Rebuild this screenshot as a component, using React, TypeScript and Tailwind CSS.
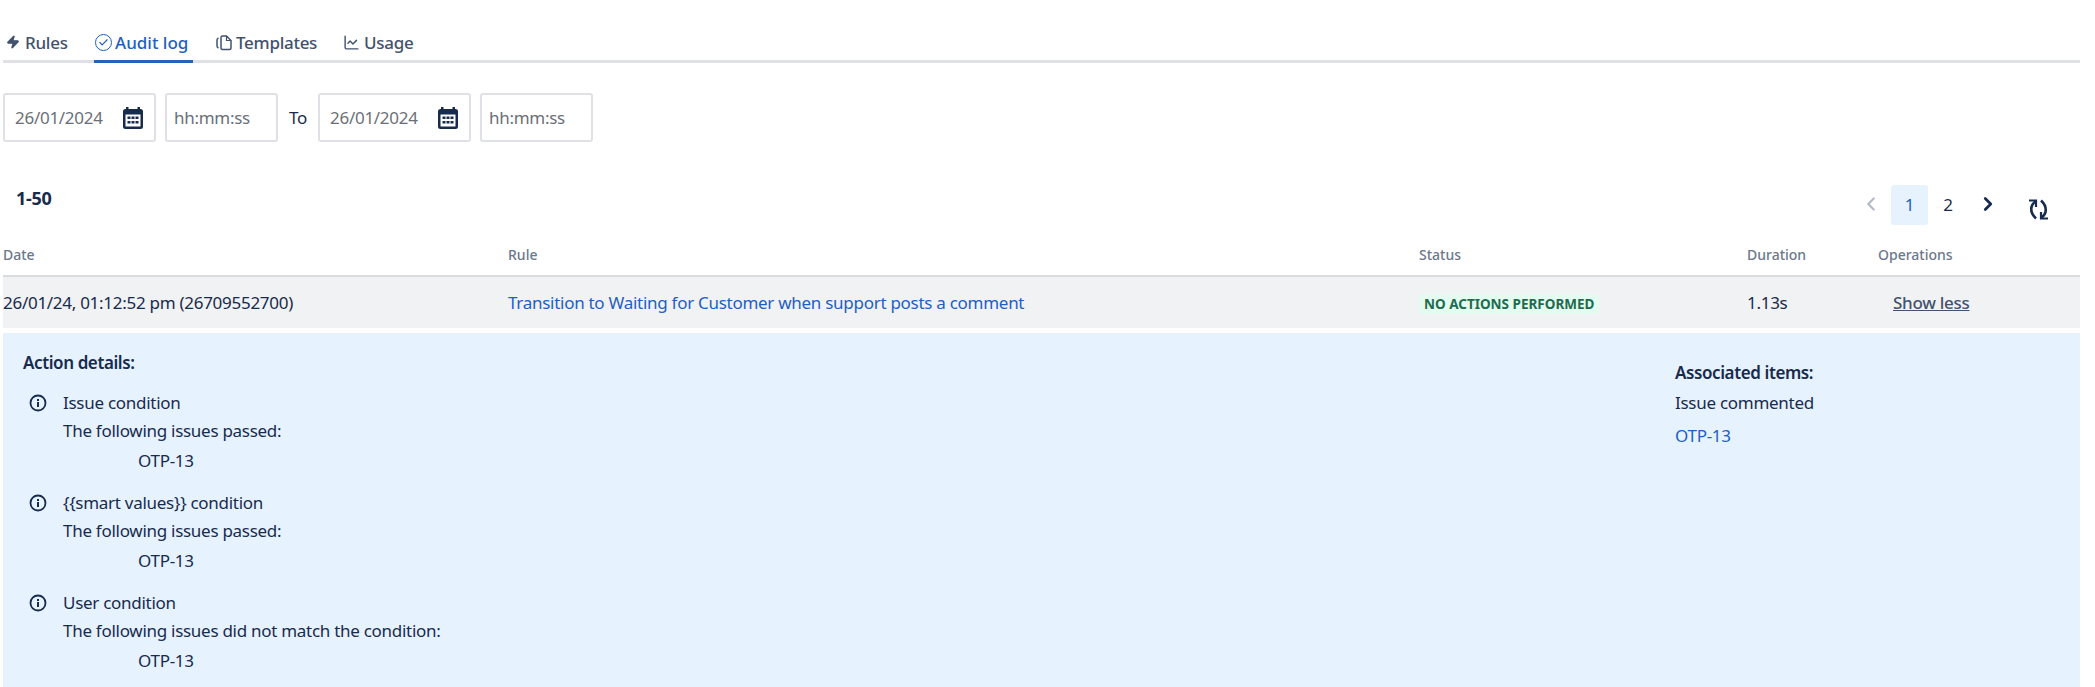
import { Check, ChevronLeft, ChevronRight, LineChart, Zap } from "lucide-react";

const columns = "grid grid-cols-[505px_911px_328px_131px_1fr]";

function CalendarIcon() {
    return (
        <svg width="24" height="24" viewBox="0 0 24 24" className="shrink-0">
            <path fill="#172b4d" fillRule="evenodd" d="M5 1h2.500v2h9V1H19v2h.5A2.500 2.500 0 0 1 22 5.500v15a2.500 2.500 0 0 1-2.500 2.500h-15A2.500 2.500 0 0 1 2 20.500v-15A2.500 2.500 0 0 1 4.500 3H5zM4.500 8.500V20a.5.5 0 0 0 .5.5h14a.5.5 0 0 0 .5-.5V8.500z" />
            <path fill="#172b4d" d="M6.500 10.500h3V13h-3zM10.500 10.500h3V13h-3zM14.500 10.500h3V13h-3zM6.500 15h3v2.500h-3zM10.500 15h3v2.500h-3zM14.500 15h3v2.500h-3z" />
        </svg>
    );
}

function TemplatesIcon() {
    return (
        <svg width="16" height="16" viewBox="0 0 16 16" fill="none" stroke="#42526e" strokeWidth="1.500" className="mt-[5px] shrink-0">
            <path d="M6.500 1h4L15 5.500V13a1.500 1.500 0 0 1-1.500 1.500h-7A1.500 1.500 0 0 1 5 13V2.500A1.500 1.500 0 0 1 6.500 1z" />
            <path d="M10.500 1v4.500H15" strokeWidth="1.200" />
            <path d="M2.500 3C1.500 3.500 1 4 1 5v6c0 1 .5 1.500 1.500 2" />
        </svg>
    );
}

function InfoIcon() {
    return (
        <svg width="18" height="18" viewBox="0 0 18 18" className="shrink-0">
            <circle cx="9" cy="9" r="7.500" fill="none" stroke="#172b4d" strokeWidth="1.800" />
            <rect x="8" y="8" width="2" height="5" fill="#172b4d" />
            <rect x="8" y="5" width="2" height="2" fill="#172b4d" />
        </svg>
    );
}

function RefreshIcon() {
    return (
        <svg width="21" height="21" viewBox="0 0 21 21" fill="none" stroke="#172b4d" strokeWidth="2.600">
            <path d="M7.500 2.500C2.500 6 1 13 8 19.500" />
            <path d="M1 1.500h7v6.500" strokeWidth="2.200" />
            <path d="M13.500 18.500C18.500 15 20 8 13 1.500" />
            <path d="M20 19.500h-7V13" strokeWidth="2.200" />
        </svg>
    );
}

function DateField() {
    return (
        <div className="flex h-[49px] w-[153px] items-center justify-between rounded-[3px] border-2 border-[#dfe1e6] pl-[10px] pr-[9px] text-[#6b7078]">
            <span>26/01/2024</span>
            <CalendarIcon />
        </div>
    );
}

function TimeField() {
    return (
        <div className="flex h-[49px] w-[113px] items-center rounded-[3px] border-2 border-[#dfe1e6] pl-[7px] text-[#6b7078]">
            hh:mm:ss
        </div>
    );
}

function Condition({ title, message }: { title: string; message: string }) {
    return (
        <div className="flex items-start gap-[16px] pl-[6px]">
            <div className="flex h-[28px] items-center"><InfoIcon /></div>
            <div className="leading-[28px]">
                <div>{title}</div>
                <div>{message}</div>
                <div className="pl-[75px] pt-[2px]">OTP-13</div>
            </div>
        </div>
    );
}

export default function App() {
    return (
        <div className="h-[687px] w-[2095px] overflow-hidden bg-white pl-[3px] pr-[15px] text-[17px] tracking-[-0.28px] text-[#172b4d] font-['Noto_Sans',sans-serif]">
            <div className="flex h-[63px] items-end border-b-[3px] border-[#dfe1e6] font-medium text-[#42526e]">
                <div className="flex h-[30px] w-[91px] items-start gap-[5px] pl-[3px]">
                    <Zap size={14} className="mt-[5px] shrink-0 fill-[#42526e]" />
                    <span className="leading-[26px]">Rules</span>
                </div>
                <div className="-mb-[3px] flex h-[33px] w-[99px] items-start gap-[3px] border-b-[3px] border-[#2563b8] pl-[1px] text-[#1d5fc4]">
                    <div className="mt-[4px] flex h-[17px] w-[17px] shrink-0 items-center justify-center rounded-full border-[1.500px] border-[#1d5fc4]">
                        <Check size={11} strokeWidth={2.500} />
                    </div>
                    <span className="leading-[26px] tracking-normal">Audit log</span>
                </div>
                <div className="ml-[23px] flex h-[30px] w-[127px] items-start gap-[4px]">
                    <TemplatesIcon />
                    <span className="leading-[26px]">Templates</span>
                </div>
                <div className="flex h-[30px] items-start gap-[4px]">
                    <LineChart size={17} className="mt-[4px] shrink-0" />
                    <span className="leading-[26px]">Usage</span>
                </div>
            </div>

            <div className="mt-[30px] flex items-center gap-[9px]">
                <DateField />
                <TimeField />
                <span className="px-[2px]">To</span>
                <DateField />
                <TimeField />
            </div>

            <div className="mt-[43px] flex h-[42px] items-start justify-between">
                <div className="-mt-[1px] pl-[13px] text-[18px] font-bold leading-[28px]">1-50</div>
                <div className="flex items-start pr-[31px]">
                    <ChevronLeft size={22} strokeWidth={2.500} className="mt-[8px] text-[#b3bac5]" />
                    <div className="ml-[9px] flex h-[40px] w-[37px] items-center justify-center rounded-[3px] bg-[#e7f2ff] text-[#1d5fc4]">1</div>
                    <div className="flex h-[40px] w-[40px] items-center justify-center">2</div>
                    <ChevronRight size={22} strokeWidth={3} className="ml-[9px] mt-[8px]" />
                    <div className="ml-[29px] mt-[14px]"><RefreshIcon /></div>
                </div>
            </div>

            <div className={`${columns} mt-[7px] h-[43px] items-center border-b-2 border-[#d9dbdf] text-[14px] font-medium tracking-normal text-[#6b778c]`}>
                <span>Date</span>
                <span>Rule</span>
                <span>Status</span>
                <span>Duration</span>
                <span>Operations</span>
            </div>

            <div className={`${columns} h-[51px] items-center bg-[#f1f2f4]`}>
                <span>26/01/24, 01:12:52 pm (26709552700)</span>
                <span className="text-[#1d5fc4]">Transition to Waiting for Customer when support posts a comment</span>
                <span>
                    <span className="rounded-[3px] bg-[#e3fcef] px-[5px] py-[1px] text-[13.500px] font-bold tracking-normal text-[#1f6b4f]">NO ACTIONS PERFORMED</span>
                </span>
                <span>1.13s</span>
                <span className="pl-[15px] font-medium text-[#42526e] underline">Show less</span>
            </div>

            <div className="mt-[5px] flex h-[354px] bg-[#e7f2ff]">
                <div className="w-[1672px] pl-[20px] pt-[16px]">
                    <div className="font-semibold leading-[28px] tracking-[-0.4px]">Action details:</div>
                    <div className="mt-[12px] flex flex-col gap-[14px]">
                        <Condition title="Issue condition" message="The following issues passed:" />
                        <Condition title="{{smart values}} condition" message="The following issues passed:" />
                        <Condition title="User condition" message="The following issues did not match the condition:" />
                    </div>
                </div>
                <div className="pt-[26px] leading-[28px]">
                    <div className="font-semibold tracking-[-0.4px]">Associated items:</div>
                    <div className="mt-[2px]">Issue commented</div>
                    <div className="mt-[5px] text-[#1d5fc4]">OTP-13</div>
                </div>
            </div>
        </div>
    );
}
